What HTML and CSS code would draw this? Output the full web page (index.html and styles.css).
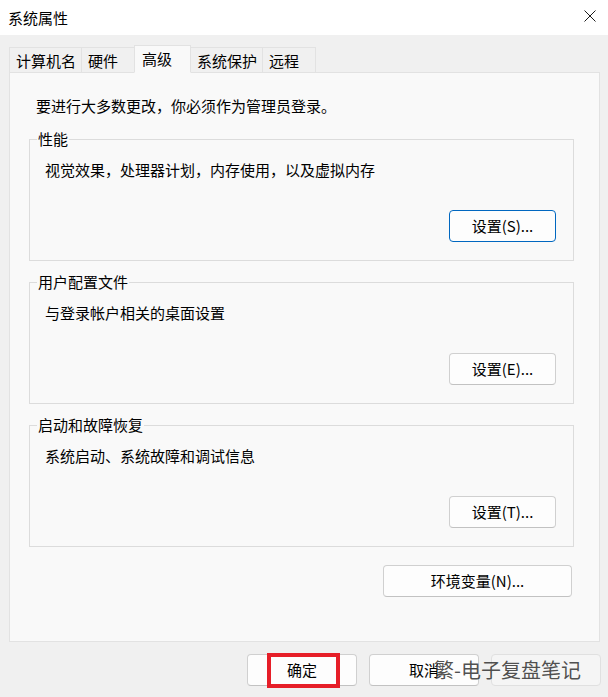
FILE: index.html
```html
<!DOCTYPE html>
<html lang="zh-CN">
<head>
  <meta charset="UTF-8">
  <meta name="viewport" content="width=device-width, initial-scale=1.0">
  <title>系统属性</title>
  <link rel="stylesheet" href="styles.css">
</head>
<body>

  <div class="dialog">
    <!-- Title bar -->
    <div class="titlebar">
      <span class="title">系统属性</span>
      <button class="close" aria-label="关闭">
        <svg width="12" height="12" viewBox="0 0 12 12">
          <path d="M0.5 0.5 L11.5 11.5 M11.5 0.5 L0.5 11.5" stroke="#1a1a1a" stroke-width="1" fill="none"/>
        </svg>
      </button>
    </div>

    <div class="content">
      <div class="tabs">
        <div class="tab">计算机名</div>
        <div class="tab">硬件</div>
        <div class="tab active">高级</div>
        <div class="tab">系统保护</div>
        <div class="tab">远程</div>
      </div>

      <div class="panel">
        <p class="note">要进行大多数更改，你必须作为管理员登录。</p>

        <fieldset class="group">
          <legend>性能</legend>
          <p>视觉效果，处理器计划，内存使用，以及虚拟内存</p>
          <div class="group-actions">
            <button class="btn focused">设置(S)...</button>
          </div>
        </fieldset>

        <fieldset class="group">
          <legend>用户配置文件</legend>
          <p>与登录帐户相关的桌面设置</p>
          <div class="group-actions">
            <button class="btn">设置(E)...</button>
          </div>
        </fieldset>

        <fieldset class="group">
          <legend>启动和故障恢复</legend>
          <p>系统启动、系统故障和调试信息</p>
          <div class="group-actions">
            <button class="btn">设置(T)...</button>
          </div>
        </fieldset>

        <div class="env-row">
          <button class="btn env">环境变量(N)...</button>
        </div>
      </div>
    </div>

    <!-- Bottom buttons -->
    <div class="footer">
      <button class="btn wide">确定</button>
      <button class="btn wide">取消</button>
      <button class="btn wide" disabled></button>
      <div class="mark"></div>
      <div class="watermark">繁-电子复盘笔记</div>
    </div>
  </div>

</body>
</html>
```

FILE: styles.css
```css
* {
  margin: 0;
  padding: 0;
  box-sizing: border-box;
}

body {
  font-family: "Noto Sans CJK SC", "Noto Sans", sans-serif;
  font-size: 15px;
  color: #000;
  background-color: #f0f0f0;
  overflow: hidden;
}

.dialog {
  width: 608px;
  height: 697px;
  display: flex;
  flex-direction: column;
}

.titlebar {
  height: 35px;
  flex-shrink: 0;
  background-color: #fff;
  display: flex;
  align-items: center;
  justify-content: space-between;
  padding-left: 8px;
}

.title {
  line-height: 20px;
  margin-top: 1px;
}

.close {
  width: 36px;
  height: 35px;
  border: none;
  background: none;
  display: flex;
  align-items: center;
  justify-content: center;
  padding-bottom: 3px;
}

.content {
  flex: 1;
  display: flex;
  flex-direction: column;
  padding: 10px 8px 0 9px;
}

.tabs {
  display: flex;
  align-items: flex-end;
  margin-bottom: -1px;
}

.tab {
  position: relative;
  height: 26px;
  min-width: 54px;
  padding: 0 5px 0 6px;
  margin-right: -1px;
  display: flex;
  align-items: center;
  line-height: 24px;
  background-color: #f0f0f0;
  border: 1px solid #e2e2e2;
  padding-top: 1px;
}

.tab.active {
  height: 28px;
  min-width: 57px;
  padding-left: 7px;
  padding-top: 0;
  background-color: #f9f9f9;
  border-bottom-color: #f9f9f9;
  z-index: 1;
}

.panel {
  flex: 1;
  background-color: #f9f9f9;
  border: 1px solid #e2e2e2;
  padding: 23px 25px 0 19px;
}

.note {
  line-height: 20px;
  margin-left: 7px;
  margin-bottom: 13px;
}

.group {
  border: 1px solid #dcdcdc;
  padding: 11px 17px 18px 7px;
  margin: 0;
  min-inline-size: 0;
}

.group + .group {
  margin-top: 11px;
}

.group legend {
  line-height: 20px;
  padding: 0 1px;
}

.group p {
  line-height: 20px;
  margin-left: 8px;
}

.group-actions {
  display: flex;
  justify-content: flex-end;
  margin-top: 30px;
}

.btn {
  font-family: inherit;
  font-size: 15px;
  color: #000;
  height: 32px;
  width: 107px;
  background-color: #fdfdfd;
  border: 1px solid #d0d0d0;
  border-bottom-color: #c2c2c2;
  border-radius: 4px;
  line-height: 28px;
}

.btn.focused {
  border-color: #0067c0;
}

.env-row {
  display: flex;
  justify-content: flex-end;
  margin-top: 18px;
  padding-right: 2px;
}

.btn.env {
  width: 189px;
}

.footer {
  position: relative;
  flex-shrink: 0;
  display: flex;
  justify-content: flex-end;
  gap: 12px;
  padding: 12px 7px 11px;
}

.btn.wide {
  width: 110px;
}

.btn:disabled {
  background-color: #f5f5f5;
  border-color: #e0e0e0;
}

/* annotation over the OK button */
.mark {
  position: absolute;
  left: 267px;
  top: 11px;
  width: 73px;
  height: 35px;
  border: 4px solid #e61e28;
}

.watermark {
  position: absolute;
  left: 434px;
  top: 16px;
  font-size: 20px;
  line-height: 24px;
  color: rgba(50, 50, 50, 0.85);
  white-space: nowrap;
}
```
